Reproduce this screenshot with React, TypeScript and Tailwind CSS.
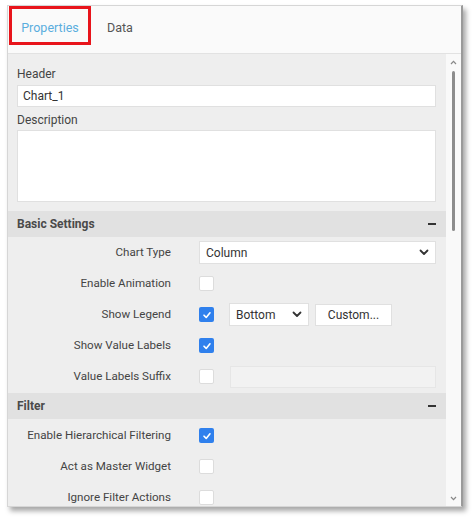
import React from "react";

const font = { fontFamily: "Roboto, 'Noto Sans', sans-serif" };

function Check({ on }: { on?: boolean }) {
  if (on)
    return (
      <div className="w-[15px] h-[15px] rounded-[2px] bg-[#2f80ed] flex items-center justify-center">
        <svg width="10" height="10" viewBox="0 0 10 10">
          <path d="M2 5.2 L4.2 7.4 L8 2.8" fill="none" stroke="#fff" strokeWidth="1.6" strokeLinecap="round" strokeLinejoin="round" />
        </svg>
      </div>
    );
  return <div className="w-[15px] h-[15px] rounded-[2px] bg-white border border-[#dcdcdc]" />;
}

function Chevron() {
  return (
    <svg width="10" height="7" viewBox="0 0 10 7">
      <path d="M1.5 1.5 L5 5 L8.5 1.5" fill="none" stroke="#333" strokeWidth="1.8" strokeLinecap="round" strokeLinejoin="round" />
    </svg>
  );
}

function Row({ label, children }: { label: string; children?: React.ReactNode }) {
  return (
    <div className="h-[31px] flex items-center">
      <div className="w-[163px] text-right text-[11.6px] text-[#444]">{label}</div>
      <div className="ml-[28px] flex items-center flex-1 pr-[10px]">{children}</div>
    </div>
  );
}

function SectionHeader({ title }: { title: string }) {
  return (
    <div className="h-[26px] bg-[#e1e1e1] flex items-center justify-between pl-[9px] pr-[9px]">
      <span className="text-[12px] font-bold text-[#4a4a4a]">{title}</span>
      <span className="w-[8px] h-[2px] bg-[#333] mr-[1px]" />
    </div>
  );
}

export default function App() {
  return (
    <div className="w-[474px] h-[520px] bg-white pt-[5px] pl-[7px]" style={font}>
      <div className="w-[456px] h-[502px] border border-[#d6d6d6] border-r-[2px] border-r-[#9a9a9a] shadow-[3px_4px_5px_rgba(0,0,0,0.35)] flex flex-col overflow-hidden bg-[#eeeeee]">
        <div className="h-[48px] bg-[#fafafa] border-b border-[#e2e2e2] flex items-start shrink-0 relative">
          <div className="absolute left-[1px] top-[0px] w-[82px] h-[39px] border-[3px] border-[#e8141b]" />
          <div className="w-[84px] h-[44px] flex items-center justify-center text-[12.5px] text-[#5aaede]">Properties</div>
          <div className="ml-[15px] h-[44px] flex items-center text-[12.5px] text-[#555]">Data</div>
        </div>
        <div className="flex flex-1 min-h-0">
          <div className="flex-1 min-w-0 overflow-hidden">
            <div className="px-[9px] pt-[13px]">
              <div className="text-[12px] text-[#444] leading-[14px]">Header</div>
              <div className="mt-[4px] mr-[1px] h-[22px] bg-white border border-[#e0e0e0] flex items-center pl-[5px] text-[12px] text-[#333]">Chart_1</div>
              <div className="mt-[6px] text-[12px] text-[#444] leading-[14px]">Description</div>
              <div className="mt-[3px] mr-[1px] h-[72px] bg-white border border-[#e0e0e0]" />
            </div>
            <div className="mt-[9px]">
              <SectionHeader title="Basic Settings" />
              <Row label="Chart Type">
                <div className="w-full h-[23px] bg-white border border-[#e0e0e0] flex items-center justify-between px-[6px] text-[12px] text-[#333]">
                  <span>Column</span>
                  <Chevron />
                </div>
              </Row>
              <Row label="Enable Animation">
                <Check />
              </Row>
              <Row label="Show Legend">
                <Check on />
                <div className="ml-[15px] w-[80px] h-[23px] bg-white border border-[#e0e0e0] flex items-center justify-between px-[6px] text-[12px] text-[#333]">
                  <span>Bottom</span>
                  <Chevron />
                </div>
                <div className="ml-[6px] w-[77px] h-[22px] bg-white border border-[#e0e0e0] flex items-center justify-center text-[12px] text-[#333]">Custom...</div>
              </Row>
              <Row label="Show Value Labels">
                <Check on />
              </Row>
              <Row label="Value Labels Suffix">
                <Check />
                <div className="ml-[16px] flex-1 h-[22px] bg-[#f2f2f2] border border-[#e6e6e6]" />
              </Row>
            </div>
            <div className="mt-[1px]">
              <SectionHeader title="Filter" />
              <div className="pt-[1px]">
                <Row label="Enable Hierarchical Filtering">
                  <Check on />
                </Row>
                <Row label="Act as Master Widget">
                  <Check />
                </Row>
                <Row label="Ignore Filter Actions">
                  <Check />
                </Row>
              </div>
            </div>
          </div>
          <div className="w-[15px] bg-[#f9f9f9] flex flex-col items-center shrink-0">
            <svg className="mt-[6px]" width="7" height="5" viewBox="0 0 7 5">
              <path d="M1 4 L3.5 1.3 L6 4" fill="none" stroke="#888" strokeWidth="1.2" />
            </svg>
            <div className="mt-[6px] w-[3px] h-[160px] rounded-full bg-[#8c8c8c]" />
            <div className="flex-1" />
            <svg className="mb-[5px]" width="7" height="5" viewBox="0 0 7 5">
              <path d="M1 1 L3.5 3.7 L6 1" fill="none" stroke="#888" strokeWidth="1.2" />
            </svg>
          </div>
        </div>
      </div>
    </div>
  );
}
